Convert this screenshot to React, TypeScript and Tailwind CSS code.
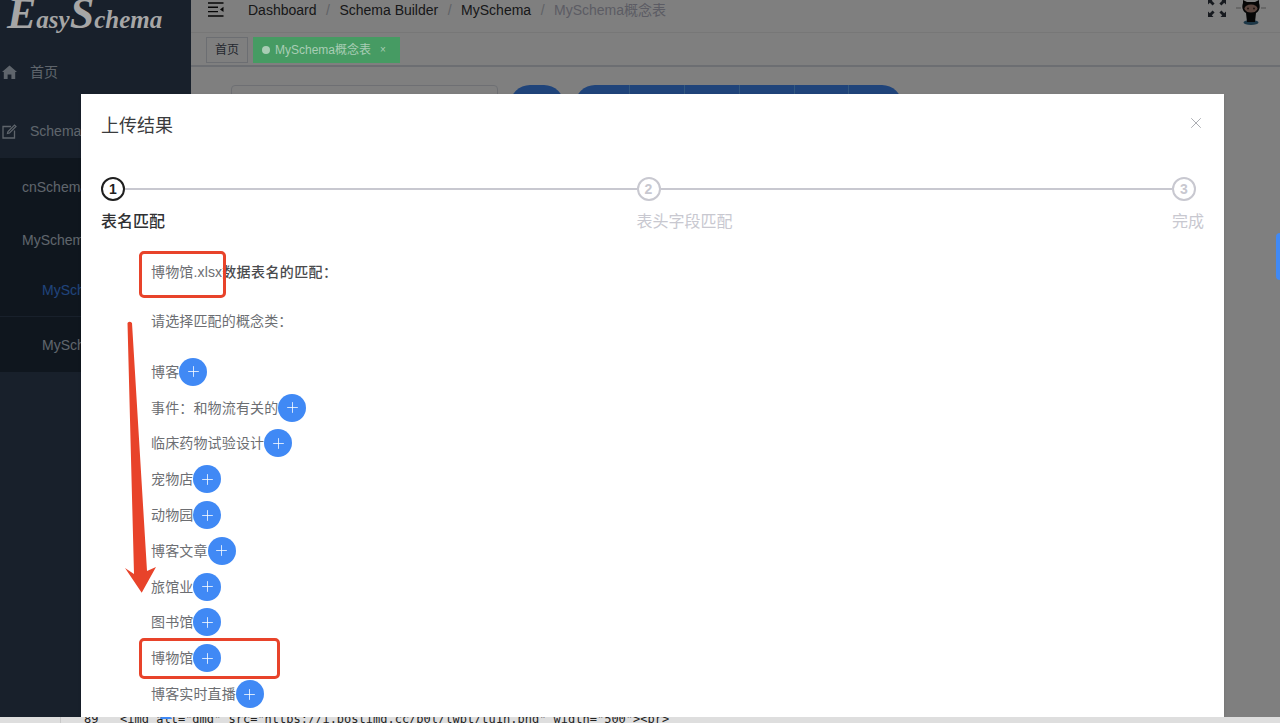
import { Plus, X } from "lucide-react";

const FONT = { fontFamily: '"Liberation Sans", "Noto Sans CJK SC", sans-serif' };

const concepts = [
  "博客",
  "事件：和物流有关的",
  "临床药物试验设计",
  "宠物店",
  "动物园",
  "博客文章",
  "旅馆业",
  "图书馆",
  "博物馆",
  "博客实时直播",
];

function HomeIcon() {
  return (
    <svg width="15" height="14" viewBox="0 0 15 14" className="shrink-0">
      <path d="M7.5 0.5 L15 7 L13.2 7 L13.2 14 L9.4 14 L9.4 9.5 L5.6 9.5 L5.6 14 L1.8 14 L1.8 7 L0 7 Z" fill="currentColor" />
    </svg>
  );
}

function EditIcon() {
  return (
    <svg width="15" height="15" viewBox="0 0 15 15" fill="none" stroke="currentColor" className="shrink-0">
      <path d="M9 2.5 H1 V14 H12.5 V6.5" strokeWidth="1.3" />
      <path d="M5.5 9.5 L6 7.5 L12.5 1 L14 2.5 L7.5 9 Z" strokeWidth="1.2" />
    </svg>
  );
}

function Hamburger() {
  return (
    <svg width="16" height="15" viewBox="0 0 16 15" className="shrink-0">
      <path d="M0 1 H15.5 M0 14 H15.5 M0 5.3 H10 M0 9.6 H10" stroke="#0d0d0d" strokeWidth="1.4" />
      <path d="M15.5 4.8 V10 L12 7.4 Z" fill="#0d0d0d" />
    </svg>
  );
}

function FullscreenIcon() {
  return (
    <svg width="18" height="18" viewBox="0 0 18 18" fill="#2f353f" className="shrink-0">
      <path d="M0 0 H5.5 L3.8 1.7 L6.6 4.5 L4.6 6.5 L1.8 3.7 L0 5.5 Z" />
      <path d="M18 0 H12.5 L14.2 1.7 L11.4 4.5 L13.4 6.5 L16.2 3.7 L18 5.5 Z" />
      <path d="M0 18 H5.5 L3.8 16.3 L6.6 13.5 L4.6 11.5 L1.8 14.3 L0 12.5 Z" />
      <path d="M18 18 H12.5 L14.2 16.3 L11.4 13.5 L13.4 11.5 L16.2 14.3 L18 12.5 Z" />
    </svg>
  );
}

function Octocat() {
  return (
    <svg width="32" height="26" viewBox="0 0 32 26" className="shrink-0">
      <ellipse cx="16" cy="22.5" rx="7.5" ry="2.5" fill="#3b6f8f" />
      <path d="M8 3 L8 0 L12 2 H20 L24 0 L24 3 C25.5 7 24.5 11 21 13 L20 22 H12 L11 13 C7.5 11 6.5 7 8 3 Z" fill="#0d0d0d" />
      <ellipse cx="16" cy="8.5" rx="6.5" ry="4" fill="#b48a7c" />
      <circle cx="13" cy="8.5" r="1" fill="#402a24" />
      <circle cx="19" cy="8.5" r="1" fill="#402a24" />
      <path d="M1 8 H6 M26 8 H31" stroke="#777" strokeWidth="0.7" />
    </svg>
  );
}

function Step({ n, label, active }: { n: number; label: string; active?: boolean }) {
  return (
    <div className={n === 3 ? "shrink-0" : "flex-1"}>
      <div className="flex items-center h-6">
        <div
          className={`w-6 h-6 rounded-full border-2 flex items-center justify-center text-sm font-bold bg-white shrink-0 ${
            active ? "border-[#1f1f1f] text-[#1f1f1f]" : "border-[#c8c8d0] text-[#c8c8d0]"
          }`}
        >
          {n}
        </div>
        {n !== 3 && <div className="flex-1 h-0.5 bg-[#c8c8d0]"></div>}
      </div>
      <div className={`mt-[11px] text-base leading-[20px] ${active ? "font-medium text-[#303133]" : "text-[#c8c8d0]"}`}>
        {label}
      </div>
    </div>
  );
}

export default function App() {
  return (
    <div className="w-[1280px] h-[723px] overflow-hidden flex flex-col bg-white" style={FONT}>
      <div className="relative flex-1 flex min-h-0">
        <aside className="w-[191px] shrink-0 bg-[#304156] text-[#bfcbd9] text-sm flex flex-col">
          <div
            className="relative z-10 h-[52px] pl-[7px] -mt-[8px] flex items-baseline font-bold italic text-[#a6a6a6] leading-none"
            style={{ fontFamily: '"Liberation Serif", serif' }}
          >
            <span className="text-[44px]">E</span>
            <span className="text-[25px]">asy</span>
            <span className="text-[44px]">S</span>
            <span className="text-[25px]">chema</span>
          </div>
          <div className="h-[56px] flex items-center gap-[13px] pl-[2px]">
            <HomeIcon />
            <span>首页</span>
          </div>
          <div className="h-[58px] pt-[4px] flex items-center gap-[13px] pl-[2px]">
            <EditIcon />
            <span>Schema Builder</span>
          </div>
          <div className="bg-[#1f2d3d] h-[214px] flex flex-col">
            <div className="h-[58px] pl-[22px] flex items-center">cnSchema</div>
            <div className="h-[48px] pl-[22px] flex items-center">MySchema</div>
            <div className="h-[53px] pl-[42px] flex items-center text-[#4089f5] border-b border-[#304156]">MySchema概念表</div>
            <div className="flex-1 pl-[42px] flex items-center">MySchema实例</div>
          </div>
        </aside>

        <main className="flex-1 min-w-0 flex flex-col">
          <div className="h-[33px] shrink-0 flex items-start pl-[17px] pr-[13px] text-sm text-[#303133] border-b border-[#eeeeee]">
            <div className="mt-[2px]"><Hamburger /></div>
            <div className="ml-[24px] mt-[1px] leading-[18px] flex gap-[9.5px]">
              <span>Dashboard</span>
              <span className="text-[#c0c4cc]">/</span>
              <span>Schema Builder</span>
              <span className="text-[#c0c4cc]">/</span>
              <span>MySchema</span>
              <span className="text-[#c0c4cc]">/</span>
              <span className="text-[#b8b8c8]">MySchema概念表</span>
            </div>
            <div className="ml-auto flex items-start gap-[9px]">
              <div className="-mt-[1px]"><FullscreenIcon /></div>
              <Octocat />
            </div>
          </div>
          <div className="h-[34px] shrink-0 flex items-start gap-[5px] pl-[15px] pt-[4px] border-b-2 border-[#d8dce5] text-xs">
            <div className="h-[26px] w-[42px] flex items-center justify-center border border-[#d8dce5] text-[#495060]">首页</div>
            <div className="relative z-10 h-[26px] w-[147px] pl-[9px] flex items-center bg-[#469b63] text-[#a9cdb5] gap-[5px]">
              <span className="w-2 h-2 rounded-full bg-[#a9cdb5]"></span>
              <span>MySchema概念表</span>
              <span className="ml-[4px] text-[10px]">×</span>
            </div>
          </div>
          <div className="flex items-start pl-[40px] pt-[18px]">
            <div className="w-[267px] h-[40px] border border-[#dcdfe6] rounded"></div>
            <div className="ml-[12px] w-[54px] h-[40px] rounded-[20px] bg-[#4089f5]"></div>
            <div className="ml-[11px] h-[40px] flex rounded-[20px] overflow-hidden divide-x divide-[#66b1ff] bg-[#4089f5]">
              <div className="w-[55px]"></div>
              <div className="w-[55px]"></div>
              <div className="w-[55px]"></div>
              <div className="w-[55px]"></div>
              <div className="w-[54px]"></div>
              <div className="w-[53px]"></div>
            </div>
          </div>
        </main>

        <div className="absolute inset-0 bg-black/50 pl-[81px] pr-[56px] pt-[94px]">
          <div className="relative h-[623px] overflow-hidden bg-white pl-5 pr-5 shadow-sm">
            <div className="flex items-start justify-between pt-[21px]">
              <h2 className="text-lg leading-[22px] text-[#3a3b3d]">上传结果</h2>
              <X className="w-[18px] h-[18px] text-[#909399] -mt-[1px] mr-[-1px]" strokeWidth={1} />
            </div>
            <div className="flex mt-[40px]">
              <Step n={1} label="表名匹配" active />
              <Step n={2} label="表头字段匹配" />
              <Step n={3} label="完成" />
            </div>
            <div className="pl-[50px] mt-[30px] text-sm text-[#6c6e72] tracking-[0.15px]">
              <div className="h-[20px] leading-[20px]">
                博物馆.xlsx<span className="font-medium text-[#4a4b4e] tracking-[0.4px]">数据表名的匹配：</span>
              </div>
              <div className="h-[20px] leading-[20px] mt-[29px]">请选择匹配的概念类：</div>
              <div className="mt-[23px] flex flex-col">
                {concepts.map((name) => (
                  <div key={name} className="h-[35.8px] flex items-center">
                    <span>{name}</span>
                    <button className="w-7 h-7 rounded-full bg-[#4089f5] text-white flex items-center justify-center">
                      <Plus className="w-[17px] h-[17px]" strokeWidth={1.1} />
                    </button>
                  </div>
                ))}
              </div>
            </div>

            {/* red annotations drawn over the screenshot */}
            <div className="absolute left-[58px] top-[157px] w-[87px] h-[47px] border-[3px] border-[#e8432a] rounded-[5px]"></div>
            <div className="absolute left-[58px] top-[544px] w-[141px] h-[41px] border-[3px] border-[#e8432a] rounded-[5px]"></div>
            <svg className="absolute left-[40px] top-[225px]" width="40" height="280" viewBox="0 0 40 280">
              <path d="M6.5 4 Q8.5 1.5 11 4 L26 252 L35 248 L20.7 273.7 L4 249 L13 255 Z" fill="#e8432a" />
            </svg>
          </div>
        </div>

        <div className="absolute right-0 top-[233px] w-1 h-[47px] rounded-l bg-[#4089f5]"></div>
      </div>

      <div
        className="relative h-[6px] shrink-0 overflow-hidden bg-[#dedede] flex text-[#222] text-xs leading-[12px]"
        style={{ fontFamily: '"DejaVu Sans Mono", monospace' }}
      >
        <div className="w-[61px] border-r border-[#c8c8c8]"></div>
        <div className="pl-[23px] -mt-[4px] whitespace-nowrap">
          89&nbsp;&nbsp;&nbsp;&lt;img alt="dmg" src="https://i.postimg.cc/b0l/lwpt/tu1n.png" width="500"&gt;&lt;br&gt;
        </div>
        <div className="absolute left-[160px] top-0 w-3 h-[2px] rounded-t-full bg-[#4089f5]"></div>
      </div>
    </div>
  );
}
